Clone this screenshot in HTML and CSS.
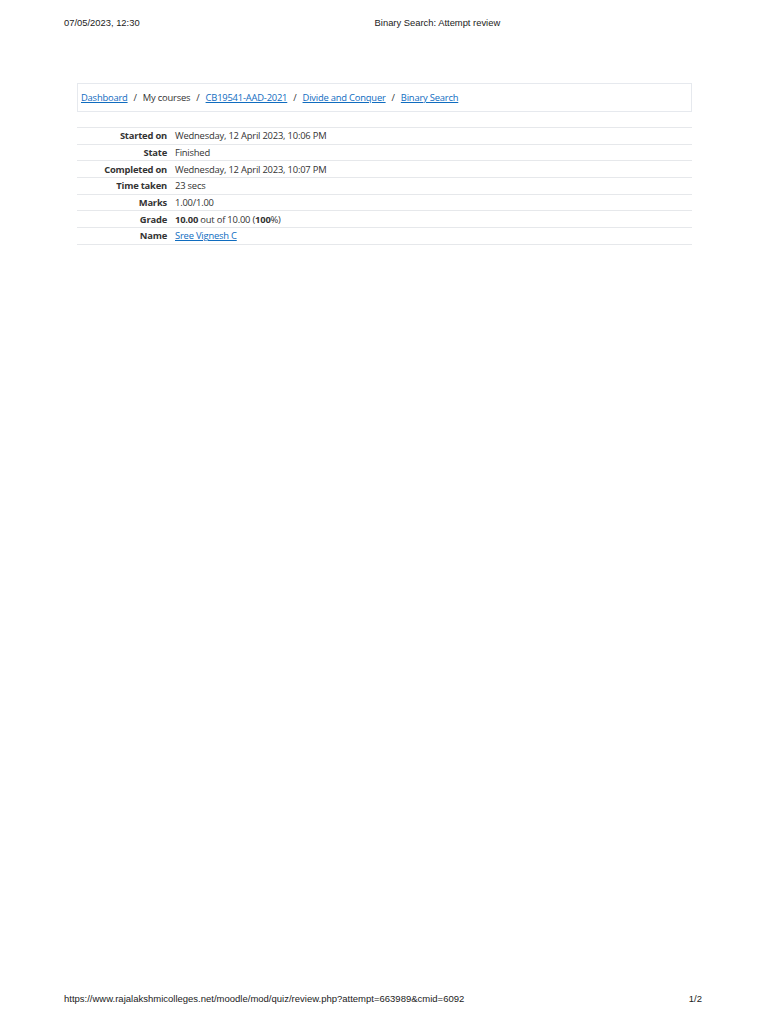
FILE: index.html
```html
<!DOCTYPE html>
<html>
<head>
<meta charset="utf-8">
<link rel="stylesheet" href="styles.css">
</head>
<body>
<div class="page">
  <header class="print-head">
    <span class="date">07/05/2023, 12:30</span>
    <span class="title">Binary Search: Attempt review</span>
  </header>
  <main class="content">
    <nav class="crumbs">
      <a href="#">Dashboard</a><span class="sep">/</span><span>My courses</span><span class="sep">/</span><a href="#">CB19541-AAD-2021</a><span class="sep">/</span><a href="#">Divide and Conquer</a><span class="sep">/</span><a href="#">Binary Search</a>
    </nav>
    <table class="summary">
      <tr><th>Started on</th><td>Wednesday, 12 April 2023, 10:06 PM</td></tr>
      <tr><th>State</th><td>Finished</td></tr>
      <tr><th>Completed on</th><td>Wednesday, 12 April 2023, 10:07 PM</td></tr>
      <tr><th>Time taken</th><td>23 secs</td></tr>
      <tr><th>Marks</th><td>1.00/1.00</td></tr>
      <tr><th>Grade</th><td><b>10.00</b> out of 10.00 (<b>100</b>%)</td></tr>
      <tr><th>Name</th><td><a href="#">Sree Vignesh C</a></td></tr>
    </table>
  </main>
  <footer class="print-foot">
    <span class="url">https://www.rajalakshmicolleges.net/moodle/mod/quiz/review.php?attempt=663989&amp;cmid=6092</span>
    <span class="pg">1/2</span>
  </footer>
</div>
</body>
</html>
```
FILE: styles.css
```css
html, body {
  margin: 0;
  padding: 0;
  background: #fff;
}
.page {
  width: 768px;
  height: 1024px;
  display: flex;
  flex-direction: column;
  font-family: "Liberation Sans", Arial, sans-serif;
}
.print-head {
  display: flex;
  padding: 16px 0 0 64px;
  font-size: 9.4px;
  color: #222;
  height: 14px;
  line-height: 14px;
}
.print-head .title {
  margin-left: 235px;
}
.content {
  flex: 1;
  padding: 53px 76px 0 77px;
  font-family: "Open Sans", sans-serif;
  font-size: 9.4px;
  color: #333;
}
.crumbs {
  border: 1px solid #e6e9ee;
  height: 27px;
  display: flex;
  align-items: center;
  padding-left: 3px;
  letter-spacing: -0.2px;
}
.crumbs a, .summary a {
  color: #0f6cbf;
  text-decoration: underline;
}
.crumbs .sep {
  margin: 0 6px;
}
.summary {
  margin-top: 15px;
  width: 100%;
  border-collapse: collapse;
  letter-spacing: -0.2px;
}
.summary tr {
  border-top: 1px solid #e6e8eb;
  height: 16.7px;
}
.summary tr:last-child {
  border-bottom: 1px solid #e6e8eb;
}
.summary th {
  width: 90px;
  text-align: right;
  font-weight: 700;
  padding: 0 8px 0 0;
  white-space: nowrap;
}
.summary td {
  padding: 0;
  text-align: left;
}
.print-foot {
  display: flex;
  padding: 0 0 18px 64px;
  font-size: 9.5px;
  color: #222;
  line-height: 14px;
}
.print-foot .pg {
  margin-left: auto;
  margin-right: 66px;
}
```
